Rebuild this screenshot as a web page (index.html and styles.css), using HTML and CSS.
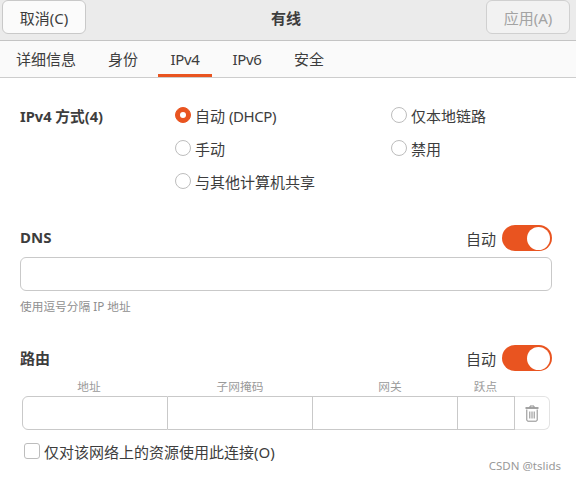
FILE: index.html
```html
<!DOCTYPE html>
<html lang="en">
<head>
  <meta charset="UTF-8" />
  <title>有线</title>
  <link rel="stylesheet" href="styles.css">
</head>
<body>

<div class="dialog">
  <div class="header">
    <button class="btn">取消(C)</button>
    <div class="title">有线</div>
    <button class="btn disabled">应用(A)</button>
  </div>

  <div class="tabs">
    <div class="tab tab-details">详细信息</div>
    <div class="tab tab-id">身份</div>
    <div class="tab tab-v4 tight active">IPv4</div>
    <div class="tab tab-v6 tight">IPv6</div>
    <div class="tab tab-sec">安全</div>
  </div>

  <div class="content">
    <div class="method">
      <div class="bold method-label">IPv4 方式(4)</div>
      <div class="radios">
        <div class="radio-item"><span class="radio checked"></span><span>自动 <span class="tight">(DHCP)</span></span></div>
        <div class="radio-item"><span class="radio"></span>仅本地链路</div>
        <div class="radio-item"><span class="radio"></span>手动</div>
        <div class="radio-item"><span class="radio"></span>禁用</div>
        <div class="radio-item"><span class="radio"></span>与其他计算机共享</div>
      </div>
    </div>

    <div class="section-head dns-head">
      <div class="bold">DNS</div>
      <div class="auto">自动<span class="switch"></span></div>
    </div>
    <div class="entry"></div>
    <div class="hint">使用逗号分隔 IP 地址</div>

    <div class="section-head route-head">
      <div class="bold">路由</div>
      <div class="auto">自动<span class="switch"></span></div>
    </div>

    <div class="route-cols">
      <div>地址</div>
      <div>子网掩码</div>
      <div>网关</div>
      <div>跃点</div>
    </div>
    <div class="route-row">
      <div class="cell cell-first"></div>
      <div class="cell"></div>
      <div class="cell"></div>
      <div class="cell cell-metric"></div>
      <div class="cell-delete">
        <svg width="14" height="17" viewBox="0 0 14 17" fill="none" stroke="#8c8c8c" stroke-width="1">
          <path d="M5 2.5V1h4v1.5" />
          <path d="M0.5 3h13" stroke-width="1.6" />
          <path d="M1.8 4.5V15a1.2 1.2 0 0 0 1.2 1.2h8a1.2 1.2 0 0 0 1.2-1.2V4.5" />
          <path d="M4.8 6.5v7M7 6.5v7M9.2 6.5v7" />
        </svg>
      </div>
    </div>

    <div class="check-row"><span class="checkbox"></span>仅对该网络上的资源使用此连接(O)</div>
  </div>

  <div class="watermark">CSDN @tslids</div>
</div>

</body>
</html>
```

FILE: styles.css
```css
* {
  box-sizing: border-box;
}

body {
  margin: 0;
  background: #fff;
  font-family: 'Noto Sans', 'Noto Sans CJK SC', sans-serif;
  font-size: 15px;
  color: #3d3d3d;
}

.dialog {
  position: relative;
  width: 576px;
  height: 480px;
  overflow: hidden;
}

.header {
  height: 41px;
  display: flex;
  justify-content: space-between;
  align-items: flex-start;
  padding: 0 6px 0 2px;
  background: #ebebeb;
  border-bottom: 1px solid #c4c4c4;
}

.btn {
  width: 84px;
  height: 34px;
  margin: 0;
  padding: 0;
  font: inherit;
  color: #3d3d3d;
  background: #fbfbfb;
  border: 1px solid #c9c9c9;
  border-radius: 6px;
}

.btn.disabled {
  color: #a3a3a3;
  background: #f2f2f2;
  border-color: #d0d0d0;
}

.title {
  font-weight: 700;
  line-height: 37px;
}

.tabs {
  height: 37px;
  display: flex;
  background: #fafafa;
  border-bottom: 1px solid #cdcdcd;
}

.tab {
  line-height: 36px;
  text-align: center;
  height: 36px;
  flex: none;
}

.tab-details { width: 92px; }
.tab-id { width: 62px; margin-right: 4px; }
.tab-v4 { width: 54px; }
.tab-v6 { width: 70px; }
.tab-sec { width: 54px; }

.tab.active {
  border-bottom: 3px solid #e95420;
}

.tight {
  letter-spacing: -0.4px;
}

.content {
  padding: 0 24px 0 20px;
}

.bold {
  font-weight: 700;
}

.method {
  display: flex;
  padding-top: 27px;
}

.method-label {
  width: 155px;
  font-size: 14.67px;
  line-height: 22px;
}

.radios {
  display: grid;
  grid-template-columns: 216px auto;
  grid-auto-rows: 33px;
}

.radio-item {
  display: flex;
  align-items: flex-start;
  line-height: 22px;
}

.radio {
  width: 16px;
  height: 16px;
  margin: 2px 4px 0 0;
  flex: none;
  background: #fff;
  border: 1px solid #bdbdbd;
  border-radius: 50%;
}

.radio.checked {
  background: #e95420;
  border-color: #e95420;
  display: flex;
  align-items: center;
  justify-content: center;
}

.radio.checked::after {
  content: "";
  width: 6px;
  height: 6px;
  background: #fff;
  border-radius: 50%;
}

.section-head {
  display: flex;
  justify-content: space-between;
  align-items: center;
  height: 26px;
}

.section-head .bold {
  padding-bottom: 2px;
}

.dns-head {
  margin-top: 21px;
}

.route-head {
  margin-top: 30px;
}

.auto {
  display: flex;
  align-items: center;
  gap: 6px;
}

.switch {
  width: 50px;
  height: 26px;
  display: flex;
  align-items: center;
  justify-content: flex-end;
  padding: 2px;
  background: #e95420;
  border-radius: 13px;
}

.switch::after {
  content: "";
  width: 23px;
  height: 23px;
  background: #fff;
  border-radius: 50%;
}

.entry {
  height: 34px;
  margin-top: 6px;
  background: #fff;
  border: 1px solid #c9c9c9;
  border-radius: 6px;
}

.hint {
  margin-top: 6px;
  font-size: 11.7px;
  line-height: 18px;
  color: #8f8f8f;
}

.route-cols {
  display: grid;
  grid-template-columns: 134px 168px 132px 59px;
  margin: 6px 0 0 2px;
  font-size: 11.7px;
  line-height: 18px;
  text-align: center;
  color: #9a9a9a;
}

.route-row {
  display: flex;
  height: 34px;
  margin: 1px 2px 0 2px;
}

.cell {
  width: 145px;
  background: #fff;
  border: 1px solid #c9c9c9;
  border-left: none;
}

.cell-first {
  width: 146px;
  border-left: 1px solid #c9c9c9;
  border-radius: 6px 0 0 6px;
}

.cell-metric {
  width: 57px;
}

.cell-delete {
  flex: 1;
  display: flex;
  align-items: center;
  justify-content: center;
  border: 1px solid #e3e3e3;
  border-left: none;
  border-radius: 0 6px 6px 0;
}

.check-row {
  display: flex;
  align-items: center;
  height: 22px;
  margin: 10px 0 0 4px;
}

.checkbox {
  width: 16px;
  height: 16px;
  margin-right: 4px;
  background: #fff;
  border: 1px solid #bdbdbd;
  border-radius: 3px;
}

.watermark {
  position: absolute;
  right: 15px;
  bottom: 6px;
  font-size: 11.5px;
  line-height: 16px;
  color: #999;
}
```
